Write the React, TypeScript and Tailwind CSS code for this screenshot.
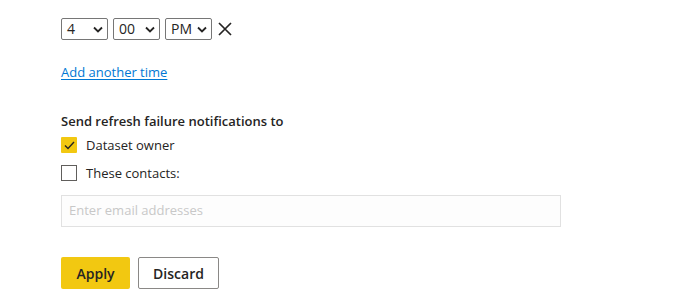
import React from "react";

function Sel({ v }: { v: string }) {
  return (
    <div className="flex h-[22px] w-[47px] items-center justify-between rounded-[2px] border border-[#767676] bg-white pl-[5px] pr-[4px] text-[14px] text-[#252423]">
      <span className="leading-none">{v}</span>
      <svg width="10" height="7" viewBox="0 0 10 7">
        <path d="M1 1.5 L5 5.5 L9 1.5" fill="none" stroke="#252423" strokeWidth="1.8" />
      </svg>
    </div>
  );
}

export default function App() {
  return (
    <div className="min-h-[302px] w-[675px] bg-white pl-[61px] pt-[18px] text-[#252423]" style={{ fontFamily: '"Open Sans", "Noto Sans", sans-serif' }}>
      <div className="flex h-[22px] items-center gap-[5px]">
        <Sel v="4" />
        <Sel v="00" />
        <Sel v="PM" />
        <svg width="14" height="14" viewBox="0 0 14 14" className="ml-[1px]">
          <path d="M1 1 L13 13 M13 1 L1 13" stroke="#252423" strokeWidth="1.7" />
        </svg>
      </div>
      <div className="mt-[21px] h-[20px] leading-[20px]">
        <a className="text-[13px] text-[#0078d4] underline underline-offset-2">Add another time</a>
      </div>
      <div className="mt-[30px] h-[20px] text-[13px] font-semibold leading-[20px] text-[#252423]">Send refresh failure notifications to</div>
      <div className="mt-[4px] flex h-[20px] items-center gap-[9px]">
        <div className="flex h-[16px] w-[16px] items-center justify-center rounded-[1px] bg-[#f2c811]">
          <svg width="11" height="9" viewBox="0 0 11 9">
            <path d="M1 4.5 L4 7.5 L10 1" fill="none" stroke="#252423" strokeWidth="1.4" />
          </svg>
        </div>
        <span className="text-[13px] leading-[20px]">Dataset owner</span>
      </div>
      <div className="mt-[8px] flex h-[20px] items-center gap-[9px]">
        <div className="h-[16px] w-[16px] border border-[#605e5c] bg-white" />
        <span className="text-[13px] leading-[20px]">These contacts:</span>
      </div>
      <div className="mt-[12px] flex h-[32px] w-[500px] items-center border border-[#e1e1e1] bg-[#fdfdfd] pl-[7px] text-[13px] text-[#c8c8c8]">
        Enter email addresses
      </div>
      <div className="mt-[30px] flex gap-[8px]">
        <button className="h-[32px] w-[69px] rounded-[2px] bg-[#f2c811] text-[14px] font-semibold text-[#252423]">Apply</button>
        <button className="h-[32px] w-[81px] rounded-[2px] border border-[#8a8886] bg-white text-[14px] font-semibold text-[#252423]">Discard</button>
      </div>
    </div>
  );
}
